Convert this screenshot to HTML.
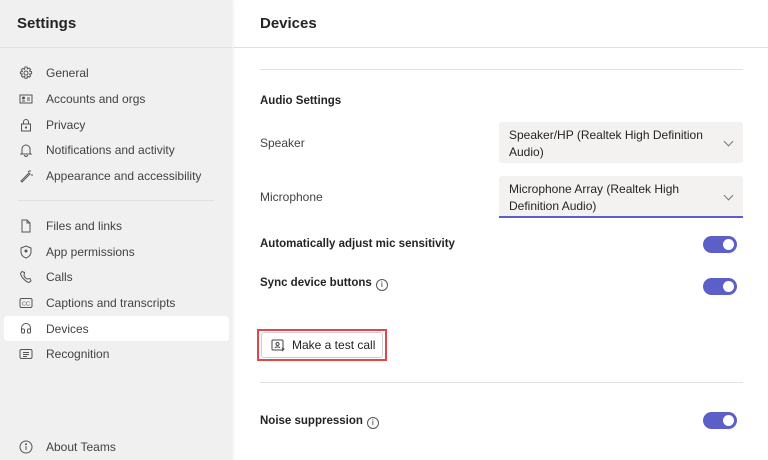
<!DOCTYPE html>
<html><head><style>
*{margin:0;padding:0;box-sizing:border-box}
body{width:768px;height:460px;overflow:hidden;font-family:"Liberation Sans",sans-serif;color:#242424;background:#fff;position:relative;font-size:12px}
.side{position:absolute;left:0;top:0;width:232px;height:460px;background:#f0f0f0;box-shadow:1px 0 3px rgba(0,0,0,.08)}
.side h1{position:absolute;left:17px;top:15px;font-size:15px;font-weight:bold}
.hl{position:absolute;left:0;top:47px;width:232px;height:1px;background:#e1e1e1}
.it{position:absolute;left:46px;font-size:12px;color:#424242;line-height:14px}
.ic{position:absolute;left:19px;width:14px;height:14px}
.a{position:absolute}
.tg{position:absolute;left:703px;width:34px;height:17px;border-radius:9px;background:#5b5fc7}
.tg:after{content:"";position:absolute;right:3px;top:3px;width:11px;height:11px;border-radius:50%;background:#fff}
.dd{position:absolute;left:499px;width:244px;background:#f3f2f1;border-radius:3px;padding:5px 34px 5px 10px;font-size:12px;line-height:17px;color:#242424}
.chev{position:absolute;right:11px;top:16px;width:7px;height:7px;border-right:1px solid #777;border-bottom:1px solid #777;transform:rotate(45deg)}
.b{font-weight:bold;font-size:11.5px}
.info{display:inline-block;width:12px;height:12px;border:1px solid #555;border-radius:50%;font-size:8px;text-align:center;line-height:10px;font-weight:normal;vertical-align:-1px;margin-left:4px}
</style></head><body>
<div class="side">
<h1>Settings</h1>
<div class="hl"></div>
<div style="position:absolute;left:18px;top:200px;width:196px;height:1px;background:#e0e0e0"></div>
<div style="position:absolute;left:4px;top:316px;width:225px;height:25px;background:#fff;border-radius:3px"></div>
<svg class="ic" style="top:66px" viewBox="0 0 14 14" fill="none" stroke="#555" stroke-width="1"><circle cx="7" cy="7" r="2"/><path d="M6 1h2l.5 2 1.7-1 1.4 1.4-1 1.7 2 .5v2l-2 .5 1 1.7-1.4 1.4-1.7-1-.5 2H6l-.5-2-1.7 1-1.4-1.4 1-1.7-2-.5V6l2-.5-1-1.7 1.4-1.4 1.7 1z"/></svg>
<svg class="ic" style="top:92px" viewBox="0 0 14 14" fill="none" stroke="#555"><rect x="1" y="3" width="12" height="8"/><circle cx="4.5" cy="6" r="1" fill="#555"/><path d="M3 9h3M8 6h3M8 8h3"/></svg>
<svg class="ic" style="top:118px" viewBox="0 0 14 14" fill="none" stroke="#555"><rect x="2.5" y="6" width="9" height="7"/><path d="M4.5 6V4a2.5 2.5 0 0 1 5 0v2"/><circle cx="7" cy="9.5" r=".6" fill="#555"/></svg>
<svg class="ic" style="top:143px" viewBox="0 0 14 14" fill="none" stroke="#555"><path d="M3 10V6a4 4 0 0 1 8 0v4l1 1H2zM5.5 12a1.5 1.5 0 0 0 3 0"/></svg>
<svg class="ic" style="top:169px" viewBox="0 0 14 14" fill="none" stroke="#555"><path d="M2 12l8-8 1 1-8 8zM11 1v2M12 6h2M9 2l1 1"/></svg>
<svg class="ic" style="top:219px" viewBox="0 0 14 14" fill="none" stroke="#555"><path d="M3 1h5l3 3v9H3zM8 1v3h3"/></svg>
<svg class="ic" style="top:245px" viewBox="0 0 14 14" fill="none" stroke="#555"><path d="M7 1l5 2v4c0 3-2.5 5-5 6-2.5-1-5-3-5-6V3z"/><circle cx="7" cy="6" r="1" fill="#555"/></svg>
<svg class="ic" style="top:270px" viewBox="0 0 14 14" fill="none" stroke="#555"><path d="M3 1.5l2.5 1-.5 3 1 2 2 1.5 3-.5 1 2.5-2 1.5C7 12 2 7 1.5 3.5z"/></svg>
<svg class="ic" style="top:296px" viewBox="0 0 14 14" fill="none" stroke="#555"><rect x="1" y="2.5" width="12" height="9" rx="1.5"/><text x="7" y="9.5" font-size="5.5" text-anchor="middle" fill="#555" stroke="none" font-family="Liberation Sans">CC</text></svg>
<svg class="ic" style="top:322px" viewBox="0 0 14 14" fill="none" stroke="#555"><path d="M2.5 9V6a4.5 4.5 0 0 1 9 0v3"/><rect x="2.5" y="7" width="3" height="4" rx="1"/><rect x="8.5" y="7" width="3" height="4" rx="1"/></svg>
<svg class="ic" style="top:347px" viewBox="0 0 14 14" fill="none" stroke="#555"><rect x="1" y="2.5" width="12" height="9" rx="1.5"/><path d="M4 5.5h6M4 7.5h6M4 9.5h4"/></svg>
<svg class="ic" style="top:440px" viewBox="0 0 14 14" fill="none" stroke="#555"><circle cx="7" cy="7" r="6"/><path d="M7 6v4"/><circle cx="7" cy="4.2" r=".5" fill="#555"/></svg>
<div class="it" style="top:66px">General</div>
<div class="it" style="top:92px">Accounts and orgs</div>
<div class="it" style="top:118px">Privacy</div>
<div class="it" style="top:143px">Notifications and activity</div>
<div class="it" style="top:169px">Appearance and accessibility</div>
<div class="it" style="top:219px">Files and links</div>
<div class="it" style="top:245px">App permissions</div>
<div class="it" style="top:270px">Calls</div>
<div class="it" style="top:296px">Captions and transcripts</div>
<div class="it" style="top:322px">Devices</div>
<div class="it" style="top:347px">Recognition</div>
<div class="it" style="top:440px">About Teams</div>
</div>
<div class="a" style="left:233px;top:47px;width:535px;height:1px;background:#e1e1e1"></div>
<div class="a" style="left:260px;top:15px;font-size:15px;font-weight:bold">Devices</div>
<div class="a" style="left:260px;top:69px;width:483px;height:1px;background:#e1e1e1"></div>
<div class="a b" style="left:260px;top:95px">Audio Settings</div>
<div class="a" style="left:260px;top:136px;color:#424242">Speaker</div>
<div class="a" style="left:260px;top:190px;color:#424242">Microphone</div>
<div class="dd" style="top:122px;height:41px">Speaker/HP (Realtek High Definition Audio)<div class="chev"></div></div>
<div class="dd" style="top:176px;height:42px;border-bottom:2px solid #5b5fc7;border-radius:3px 3px 0 0">Microphone Array (Realtek High Definition Audio)<div class="chev"></div></div>
<div class="a b" style="left:260px;top:238px">Automatically adjust mic sensitivity</div>
<div class="tg" style="top:236px"></div>
<div class="a b" style="left:260px;top:277px">Sync device buttons<span class="info">i</span></div>
<div class="tg" style="top:278px"></div>
<div class="a" style="left:257px;top:329px;width:130px;height:32px;border:2px solid #e0474c"></div>
<div class="a" style="left:261px;top:332px;width:122px;height:26px;border:1px solid #d1d1d1;border-radius:3px;background:#fff"></div>
<svg class="a" style="left:271px;top:338px" width="14" height="14" viewBox="0 0 14 14" fill="none" stroke="#444"><rect x="1" y="2" width="11" height="10" rx="1"/><circle cx="6.5" cy="6" r="1.5"/><path d="M4 10c.5-1.5 4.5-1.5 5 0M11 10l2 1-2 2"/></svg>
<div class="a" style="left:292px;top:338px;font-size:12px">Make a test call</div>
<div class="a" style="left:260px;top:382px;width:483px;height:1px;background:#e1e1e1"></div>
<div class="a b" style="left:260px;top:415px">Noise suppression<span class="info">i</span></div>
<div class="tg" style="top:412px"></div>
</body></html>
